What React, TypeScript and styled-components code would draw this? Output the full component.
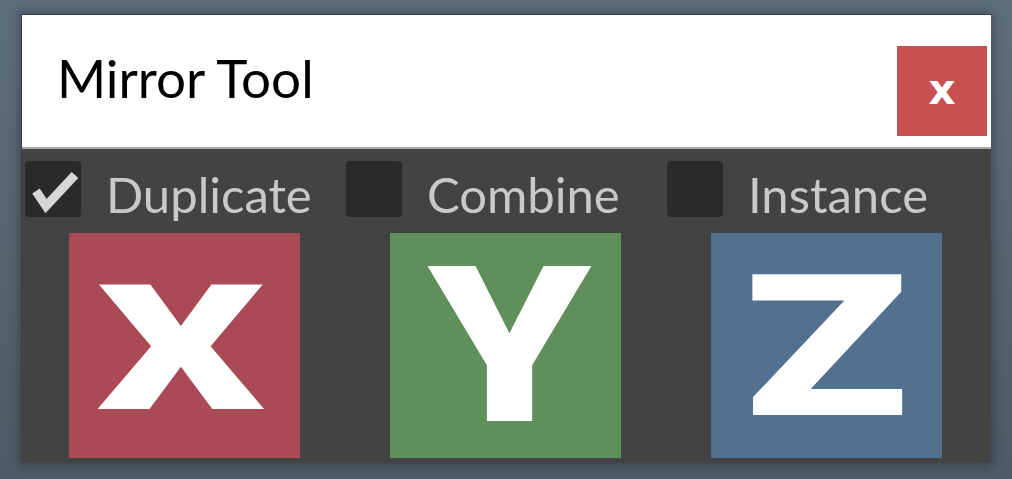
import React from "react";
import styled, { createGlobalStyle } from "styled-components";

const Global = createGlobalStyle`
  html, body { margin: 0; padding: 0; }
  body {
    width: 1012px;
    height: 479px;
    overflow: hidden;
    background: linear-gradient(180deg, #5f6e7e 0%, #55636f 60%, #4d5a67 100%);
    font-family: Lato, "Open Sans", sans-serif;
  }
`;

const Stage = styled.div`
  padding: 14px 0 0 21px;
`;

const Window = styled.div`
  width: 970px;
  height: 449px;
  display: flex;
  flex-direction: column;
  background: #434343;
  box-shadow: 0 0 10px 2px rgba(30, 38, 48, 0.45);
  border-top: 1px solid #3a4048;
  border-left: 1px solid #3a4048;
  box-sizing: border-box;
`;

const TitleBar = styled.div`
  height: 134px;
  flex: none;
  background: #ffffff;
  border-bottom: 2px solid #a7a7a7;
  display: flex;
  align-items: flex-end;
  justify-content: space-between;
  padding: 0 4px 11px 35px;
  box-sizing: border-box;
`;

const Title = styled.div`
  font-family: Lato, sans-serif;
  font-size: 53px;
  color: #000;
  align-self: center;
  margin-top: 4px;
`;

const CloseButton = styled.div`
  width: 90px;
  height: 90px;
  background: #c75050;
  display: flex;
  align-items: center;
  justify-content: center;
  color: #ffffff;
  font-family: "DejaVu Sans", sans-serif;
  font-weight: 700;
  font-size: 42px;
  line-height: 1;
  padding-bottom: 2px;
  box-sizing: border-box;
`;

const Panel = styled.div`
  flex: 1;
  display: grid;
  grid-template-columns: repeat(3, 321px);
  padding: 12px 0 0 3px;
`;

const Column = styled.div`
  display: flex;
  flex-direction: column;
`;

const CheckRow = styled.div`
  display: flex;
  align-items: center;
  gap: 25px;
  height: 56px;
`;

const CheckBox = styled.div`
  width: 56px;
  height: 56px;
  border-radius: 4px;
  background: #2a2a2a;
  flex: none;
  display: flex;
`;

const Label = styled.span`
  font-family: Lato, sans-serif;
  font-size: 49px;
  line-height: 1;
  color: #c9c9c9;
  margin-top: 10px;
`;

const AxisBox = styled.div<{ $bg: string }>`
  width: 231px;
  height: 225px;
  margin: 16px 0 0 44px;
  background: ${(p) => p.$bg};
  display: flex;
  align-items: center;
  justify-content: center;
`;

const AxisLetter = styled.span<{ $size: number; $sx: number; $dx: number; $dy: number }>`
  display: inline-block;
  font-family: Roboto, "DejaVu Sans", sans-serif;
  font-weight: 900;
  color: #ffffff;
  font-size: ${(p) => p.$size}px;
  line-height: 0.8;
  transform: translate(${(p) => p.$dx}px, ${(p) => p.$dy}px) scaleX(${(p) => p.$sx});
`;

const CheckMark = () => (
  <svg width="56" height="56" viewBox="0 0 56 56">
    <path
      d="M11 30 L21 45 L50 14"
      fill="none"
      stroke="#d6d6d6"
      strokeWidth="9"
      strokeLinejoin="miter"
    />
  </svg>
);

const items = [
  { label: "Duplicate", checked: true, letter: "X", bg: "#a94a56", size: 175, sx: 1.5, dx: -4, dy: 4 },
  { label: "Combine", checked: false, letter: "Y", bg: "#5f8f5a", size: 218, sx: 1.19, dx: 4, dy: 2 },
  { label: "Instance", checked: false, letter: "Z", bg: "#527190", size: 198, sx: 1.36, dx: 0, dy: 2 },
];

export default function App() {
  return (
    <>
      <Global />
      <Stage>
        <Window>
          <TitleBar>
            <Title>Mirror Tool</Title>
            <CloseButton>x</CloseButton>
          </TitleBar>
          <Panel>
            {items.map((it) => (
              <Column key={it.label}>
                <CheckRow>
                  <CheckBox>{it.checked && <CheckMark />}</CheckBox>
                  <Label>{it.label}</Label>
                </CheckRow>
                <AxisBox $bg={it.bg}>
                  <AxisLetter $size={it.size} $sx={it.sx} $dx={it.dx} $dy={it.dy}>
                    {it.letter}
                  </AxisLetter>
                </AxisBox>
              </Column>
            ))}
          </Panel>
        </Window>
      </Stage>
    </>
  );
}
